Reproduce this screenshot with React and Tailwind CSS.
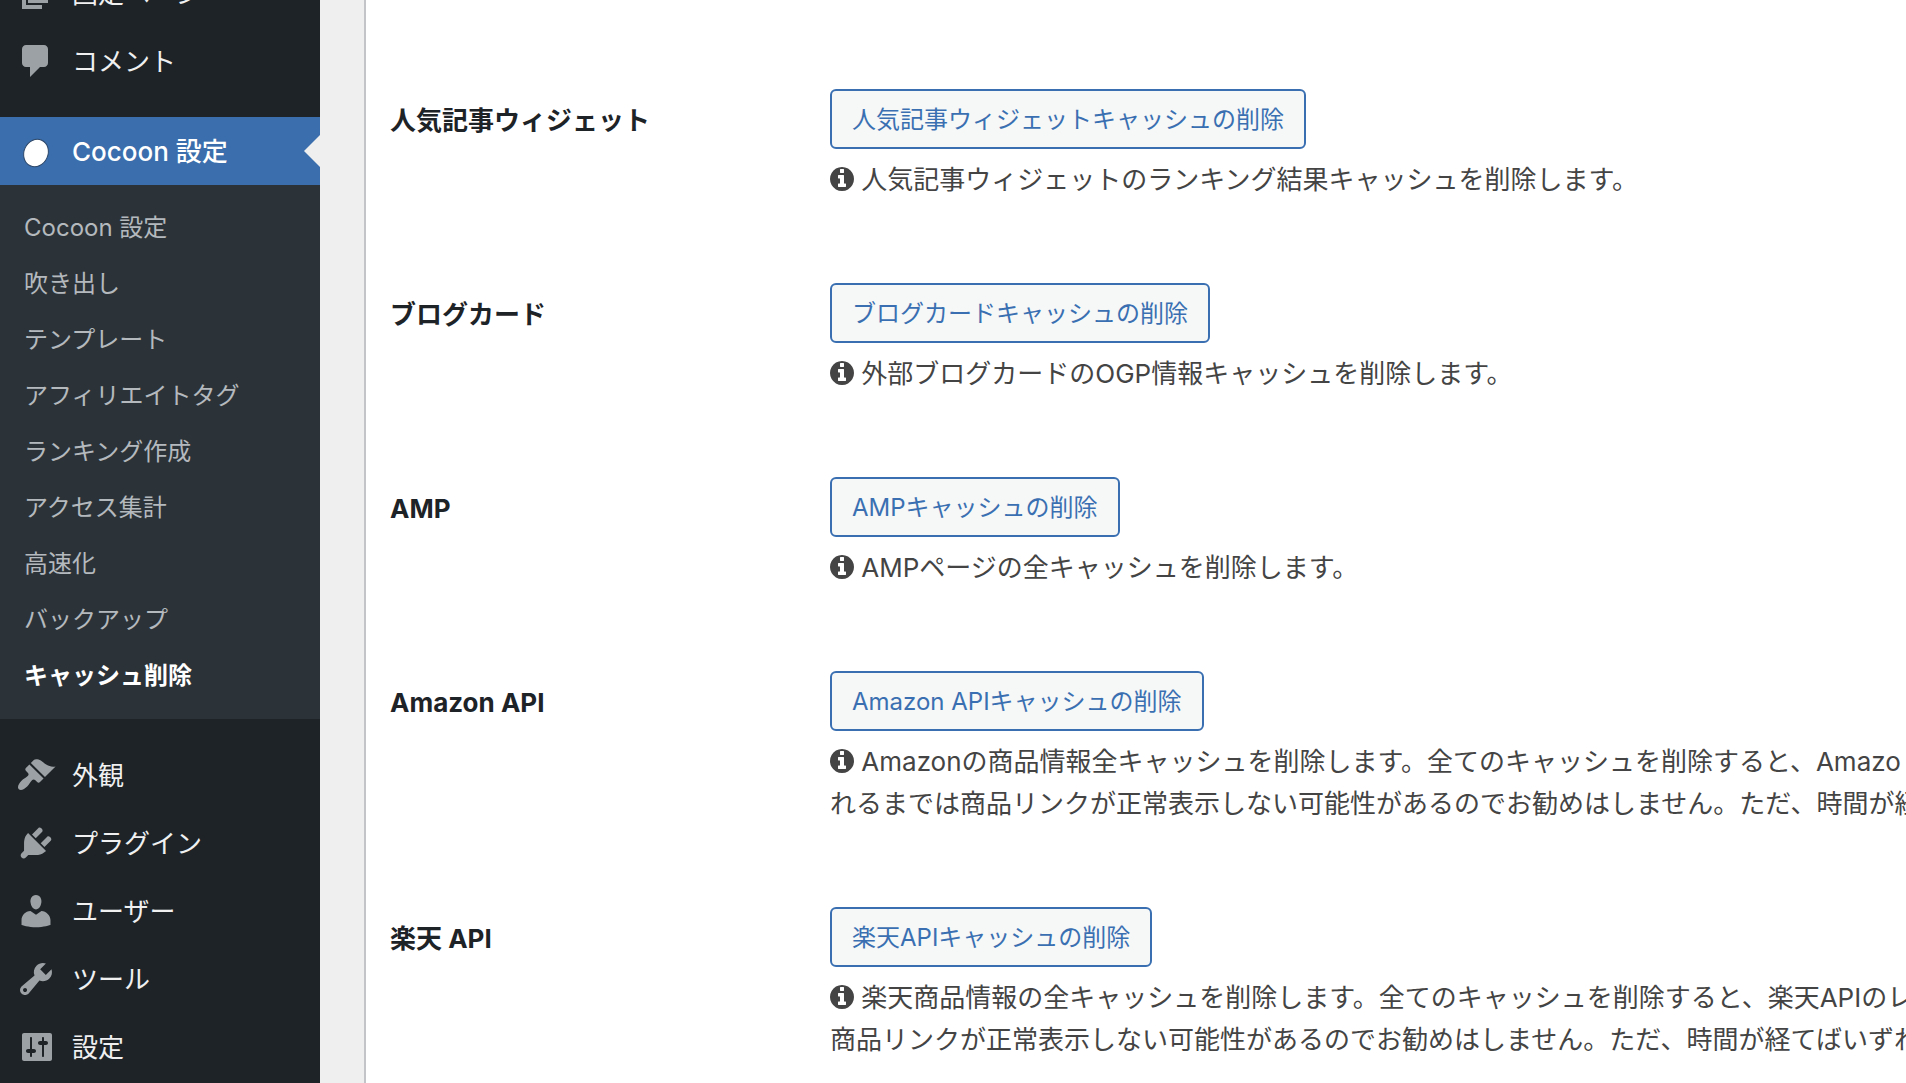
import React from "react";

const icons = {
  page: "M6 15V2h10v13H6zm-1 1h8v2H3V5h2v11z",
  comment:
    "M5 2h9q.82 0 1.41.59T16 4v7q0 .82-.59 1.41T14 13h-2l-5 5v-5H5q-.82 0-1.41-.59T3 11V4q0-.82.59-1.41T5 2z",
  appearance:
    "M14.48 11.06L7.41 3.99l1.5-1.5c.5-.56 2.3-.47 3.51.32 1.21.8 1.43 1.28 2.91 2.1 1.18.64 2.45 1.26 4.45.85zm-.71.71L6.7 4.7 4.93 6.47c-.39.39-.39 1.02 0 1.41l1.06 1.06c.39.39.39 1.03 0 1.42-.6.6-1.43 1.11-2.21 1.69-.35.26-.7.53-1.01.84C1.43 14.23.4 16.08 1.4 17.07c.99 1 2.84-.03 4.18-1.36.31-.31.58-.66.85-1.02.57-.78 1.08-1.61 1.69-2.21.39-.39 1.02-.39 1.41 0l1.06 1.06c.39.39 1.02.39 1.41 0z",
  plugins:
    "M13.11 4.36L9.87 7.6 8 5.73l3.24-3.24c.35-.34 1.05-.2 1.56.32.52.51.66 1.21.31 1.55zm-8 1.77l.91-1.12 9.01 9.01-1.19.84c-.71.71-2.63 1.16-3.82 1.16H6.14L4.9 17.26c-.59.59-1.54.59-2.12 0-.59-.58-.59-1.53 0-2.12l1.24-1.24v-3.88c0-1.13.4-3.19 1.09-3.89zm7.26 3.97l3.24-3.24c.34-.35 1.04-.21 1.55.31.52.51.66 1.21.31 1.55l-3.24 3.25z",
  users:
    "M10 9.25c-2.27 0-2.73-3.44-2.73-3.44C7 4.02 7.82 2 9.97 2c2.16 0 2.98 2.02 2.71 3.81 0 0-.41 3.44-2.68 3.44zm0 2.57L12.72 10c2.39 0 4.52 2.33 4.52 4.53v2.49s-3.65 1.13-7.24 1.13c-3.65 0-7.24-1.13-7.24-1.13v-2.49c0-2.25 1.94-4.48 4.47-4.48z",
  tools:
    "M16.68 9.77c-1.34 1.34-3.3 1.67-4.95.99l-5.41 6.52c-.99.99-2.59.99-3.58 0s-.99-2.59 0-3.57l6.52-5.42c-.68-1.65-.35-3.61.99-4.95 1.28-1.28 3.12-1.62 4.72-1.06l-2.89 2.89 2.82 2.82 2.86-2.87c.53 1.58.18 3.39-1.08 4.65zM3.81 16.21c.4.39 1.04.39 1.43 0 .4-.4.4-1.04 0-1.43-.39-.4-1.03-.4-1.43 0-.39.39-.39 1.03 0 1.43z",
  settings:
    "M18 16V4c0-.55-.45-1-1-1H4c-.55 0-1 .45-1 1v12c0 .55.45 1 1 1h13c.55 0 1-.45 1-1zM8 11h1c.55 0 1 .45 1 1s-.45 1-1 1H8v1.5c0 .28-.22.5-.5.5s-.5-.22-.5-.5V13H6c-.55 0-1-.45-1-1s.45-1 1-1h1V5.5c0-.28.22-.5.5-.5s.5.22.5.5V11zm5-2h-1c-.55 0-1-.45-1-1s.45-1 1-1h1V5.5c0-.28.22-.5.5-.5s.5.22.5.5V7h1c.55 0 1 .45 1 1s-.45 1-1 1h-1v5.5c0 .28-.22.5-.5.5s-.5-.22-.5-.5V9z",
};

const topMenu = [
  { label: "固定ページ", icon: "page" },
  { label: "コメント", icon: "comment" },
];

const subMenu = [
  "Cocoon 設定",
  "吹き出し",
  "テンプレート",
  "アフィリエイトタグ",
  "ランキング作成",
  "アクセス集計",
  "高速化",
  "バックアップ",
  "キャッシュ削除",
];

const bottomMenu = [
  { label: "外観", icon: "appearance" },
  { label: "プラグイン", icon: "plugins" },
  { label: "ユーザー", icon: "users" },
  { label: "ツール", icon: "tools" },
  { label: "設定", icon: "settings" },
];

const rows = [
  {
    title: "人気記事ウィジェット",
    button: "人気記事ウィジェットキャッシュの削除",
    lines: ["人気記事ウィジェットのランキング結果キャッシュを削除します。"],
  },
  {
    title: "ブログカード",
    button: "ブログカードキャッシュの削除",
    lines: ["外部ブログカードのOGP情報キャッシュを削除します。"],
  },
  {
    title: "AMP",
    button: "AMPキャッシュの削除",
    lines: ["AMPページの全キャッシュを削除します。"],
  },
  {
    title: "Amazon API",
    button: "Amazon APIキャッシュの削除",
    lines: [
      "Amazonの商品情報全キャッシュを削除します。全てのキャッシュを削除すると、Amazo",
      "れるまでは商品リンクが正常表示しない可能性があるのでお勧めはしません。ただ、時間が経",
    ],
  },
  {
    title: "楽天 API",
    button: "楽天APIキャッシュの削除",
    lines: [
      "楽天商品情報の全キャッシュを削除します。全てのキャッシュを削除すると、楽天APIのレ",
      "商品リンクが正常表示しない可能性があるのでお勧めはしません。ただ、時間が経てばいずれ",
    ],
  },
];

const InfoIcon = () => (
  <svg
    viewBox="0 128 1536 1536"
    className="inline size-6 fill-[#444444] align-[-2px]"
    aria-hidden="true"
  >
    <path d="M1024 1376v-160q0-14-9-23t-23-9h-96v-512q0-14-9-23t-23-9h-320q-14 0-23 9t-9 23v160q0 14 9 23t23 9h96v320h-96q-14 0-23 9t-9 23v160q0 14 9 23t23 9h448q14 0 23-9t9-23zm-128-896v-192q0-14-9-23t-23-9h-192q-14 0-23 9t-9 23v192q0 14 9 23t23 9h192q14 0 23-9t9-23zm640 416q0 209-103 385.5t-279.5 279.5-385.5 103-385.5-103-279.5-279.5-103-385.5 103-385.5 279.5-279.5 385.5-103 385.5 103 279.5 279.5 103 385.5z" />
  </svg>
);

const MenuItem = ({ label, icon }) => (
  <li>
    <a href="#" className="flex h-[68px] items-center gap-4 pl-4 text-[26px] text-[#f0f0f1]">
      <svg viewBox="0 0 20 20" className="size-10 shrink-0 fill-[#9ca1a6]" aria-hidden="true">
        <path fillRule="evenodd" d={icons[icon]} />
      </svg>
      <span>{label}</span>
    </a>
  </li>
);

const Sidebar = () => (
  <nav className="w-80 shrink-0 overflow-hidden bg-[#1d2327]">
    <ul className="-mt-[41px]">
      {topMenu.map((item) => (
        <MenuItem key={item.label} {...item} />
      ))}
      <li className="mt-[22px] mb-[22px]">
        <a
          href="#"
          className="relative flex h-[68px] items-center gap-4 bg-[#3a6eac] pl-4 text-[26px] font-medium text-white"
        >
          <svg viewBox="0 0 40 40" className="size-10 shrink-0" aria-hidden="true">
            <ellipse
              cx="20"
              cy="22"
              rx="12"
              ry="14"
              transform="rotate(24 20 22)"
              className="fill-white stroke-[#2c4668]"
              strokeWidth="1"
            />
          </svg>
          <span>Cocoon 設定</span>
          <span className="absolute top-1/2 right-0 -translate-y-1/2 border-y-16 border-r-16 border-y-transparent border-r-[#efeff0]" />
        </a>
        <ul className="bg-[#2c3338] py-[15px]">
          {subMenu.map((label) => (
            <li key={label}>
              <a
                href="#"
                className={`block pl-6 text-[24px] leading-[56px] ${
                  label === "キャッシュ削除" ? "font-semibold text-white" : "text-[#b4b9be]"
                }`}
              >
                {label}
              </a>
            </li>
          ))}
        </ul>
      </li>
      {bottomMenu.map((item) => (
        <MenuItem key={item.label} {...item} />
      ))}
    </ul>
  </nav>
);

const App = () => {
  return (
    <div
      lang="ja"
      className="flex h-screen overflow-hidden bg-[#efeff0] font-['Inter','Noto_Sans_CJK_JP',sans-serif]"
    >
      <Sidebar />
      <main className="ml-11 min-w-0 flex-1 overflow-hidden border-l-2 border-[#c3c4c7] bg-white pt-[49px] pl-6">
        <table className="w-full border-collapse">
          <tbody>
            {rows.map((row) => (
              <tr key={row.title} className="align-top">
                <th
                  scope="row"
                  className="w-[440px] min-w-[440px] pt-10 text-left text-[26px] leading-[64px] font-bold text-[#1d2327]"
                >
                  {row.title}
                </th>
                <td className="pt-10 pb-[42px]">
                  <button
                    type="button"
                    className="block h-[60px] rounded-md border-2 border-[#3a70b2] bg-[#f6f7f7] px-5 pt-0.5 text-[24px] whitespace-nowrap text-[#3a70b2]"
                  >
                    {row.button}
                  </button>
                  <p className="mt-[10px] text-[26px] leading-[42px] whitespace-nowrap text-[#444444]">
                    <InfoIcon />{" "}
                    {row.lines.map((line, i) => (
                      <React.Fragment key={line}>
                        {i > 0 && <br />}
                        {line}
                      </React.Fragment>
                    ))}
                  </p>
                </td>
              </tr>
            ))}
          </tbody>
        </table>
      </main>
    </div>
  );
};

export default App;
